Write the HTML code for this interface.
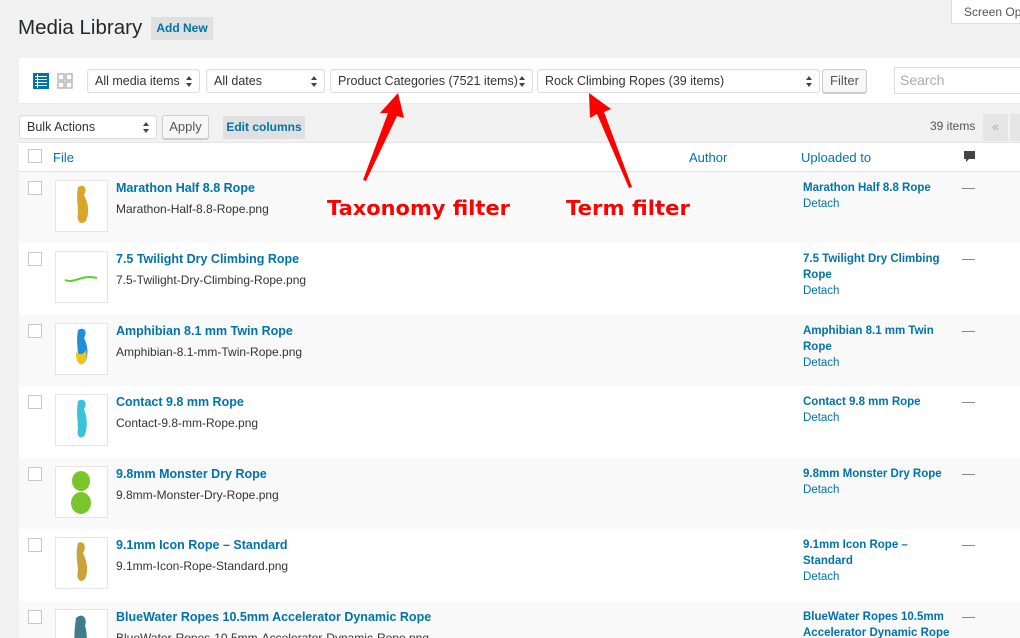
<!DOCTYPE html>
<html><head><meta charset="utf-8"><style>
*{box-sizing:border-box;margin:0;padding:0}
html,body{width:1020px;height:638px;overflow:hidden}
body{background:#f1f1f1;font-family:"Liberation Sans",sans-serif;font-size:13px;color:#444;position:relative}
.a{position:absolute}
.sel{position:absolute;background:#fff;border:1px solid #ddd;border-radius:3px;height:24px;line-height:22px;padding-left:7px;font-size:12.5px;color:#333;box-shadow:inset 0 1px 2px rgba(0,0,0,.05);white-space:nowrap;overflow:hidden}
.sel:after{content:"";position:absolute;right:7px;top:6px;width:0;height:0;border-left:3px solid transparent;border-right:3px solid transparent;border-bottom:4px solid #444}
.sel:before{content:"";position:absolute;right:7px;top:13px;width:0;height:0;border-left:3px solid transparent;border-right:3px solid transparent;border-top:4px solid #444}
.btn{position:absolute;background:#f7f7f7;border:1px solid #ccc;border-radius:3px;height:24px;line-height:22px;text-align:center;color:#555;box-shadow:0 1px 0 #ccc}
.row{position:absolute;left:19px;width:1010px;height:72px}
.cb{position:absolute;left:9px;top:9px;width:14px;height:14px;border:1px solid #c8c8c8;background:#fff}
.th{position:absolute;left:36px;top:8px;width:53px;height:52px;border:1px solid #e5e5e5;background:#fff}
.t{position:absolute;left:97px;top:9px;color:#0073aa;font-weight:bold;font-size:12.5px}
.f{position:absolute;left:97px;top:30px;color:#333;font-size:12px}
.u{position:absolute;left:784px;top:8px;color:#0073aa;font-weight:bold;font-size:11.5px;line-height:16px;width:150px}
.u span{font-weight:normal;display:block}
.d{position:absolute;left:943px;top:8px;color:#777}
.lab{font-family:"DejaVu Sans","Liberation Sans",sans-serif;font-weight:bold;font-size:20.5px;fill:#f00;stroke:#fff;stroke-width:3px;paint-order:stroke}
</style></head><body>
<div class="a" style="left:18px;top:16px;font-size:20.5px;color:#23282d">Media Library</div>
<div class="a" style="left:151px;top:17px;width:62px;height:23px;background:#e0e0e0;color:#0073aa;font-weight:bold;font-size:12px;line-height:23px;text-align:center">Add New</div>
<div class="a" style="left:951px;top:0;width:80px;height:24px;background:#fff;border:1px solid #ddd;border-top:0;color:#555;font-size:12px;line-height:24px;padding-left:12px">Screen Opt</div>
<div class="a" style="left:19px;top:58px;width:1010px;height:45px;background:#fff;box-shadow:0 1px 1px rgba(0,0,0,.04)"></div>
<svg class="a" style="left:33px;top:73px" width="16" height="16"><rect width="16" height="16" fill="#0073aa"/><g fill="#fff"><rect x="2" y="3" width="12" height="1"/><rect x="2" y="6" width="12" height="1"/><rect x="2" y="9" width="12" height="1"/><rect x="2" y="12" width="12" height="1"/><rect x="4" y="1" width="1" height="14"/></g></svg>
<svg class="a" style="left:57px;top:73px" width="16" height="16"><g fill="none" stroke="#b4b9be" stroke-width="1.5"><rect x="1" y="1" width="6" height="6"/><rect x="9" y="1" width="6" height="6"/><rect x="1" y="9" width="6" height="6"/><rect x="9" y="9" width="6" height="6"/></g></svg>
<div class="sel" style="left:87px;top:69px;width:113px">All media items</div>
<div class="sel" style="left:206px;top:69px;width:119px">All dates</div>
<div class="sel" style="left:330px;top:69px;width:203px">Product Categories (7521 items)</div>
<div class="sel" style="left:537px;top:69px;width:283px">Rock Climbing Ropes (39 items)</div>
<div class="btn" style="left:822px;top:69px;width:45px">Filter</div>
<div class="a" style="left:894px;top:67px;width:130px;height:27px;background:#fff;border:1px solid #ddd;color:#aaa;font-size:14px;line-height:25px;padding-left:5px">Search</div>
<div class="sel" style="left:19px;top:115px;width:138px">Bulk Actions</div>
<div class="btn" style="left:162px;top:115px;width:47px">Apply</div>
<div class="a" style="left:223px;top:116px;width:82px;height:23px;background:#e0e0e0;color:#0073aa;font-weight:bold;font-size:12px;line-height:23px;text-align:center">Edit columns</div>
<div class="a" style="left:930px;top:119px;color:#555;font-size:12px">39 items</div>
<div class="a" style="left:983px;top:114px;width:25px;height:27px;background:#e5e5e5;color:#aaa;text-align:center;line-height:26px">«</div>
<div class="a" style="left:1010px;top:114px;width:20px;height:27px;background:#e5e5e5"></div>
<div class="a" style="left:19px;top:142px;width:1010px;height:30px;background:#fff;border-bottom:1px solid #e1e1e1;border-top:1px solid #e5e5e5"></div>
<div class="a" style="left:28px;top:149px;width:14px;height:14px;border:1px solid #c8c8c8;background:#fff"></div>
<div class="a" style="left:53px;top:150px;color:#0073aa">File</div>
<div class="a" style="left:689px;top:150px;color:#0073aa">Author</div>
<div class="a" style="left:801px;top:150px;color:#0073aa">Uploaded to</div>
<svg class="a" style="left:964px;top:150px" width="12" height="13"><path d="M0 1h11v8H5l-3 3V9H0z" fill="#444"/></svg>

<div class="row" style="top:172px;background:#f9f9f9"><div class="cb"></div><div class="th"><svg width="51" height="50"><path d="M22 6c6-4 10 2 6 8 4 8 6 16 2 26-5 5-10 0-8-8 0-8-2-16 0-26z" fill="#d8a62a"/></svg></div><div class="t">Marathon Half 8.8 Rope</div><div class="f">Marathon-Half-8.8-Rope.png</div><div class="u">Marathon Half 8.8 Rope<span>Detach</span></div><div class="d">—</div></div>
<div class="row" style="top:243px;background:#fff"><div class="cb"></div><div class="th"><svg width="51" height="50"><path d="M9 28c10 4 16-6 32-2" stroke="#5ad12c" stroke-width="2" fill="none"/></svg></div><div class="t">7.5 Twilight Dry Climbing Rope</div><div class="f">7.5-Twilight-Dry-Climbing-Rope.png</div><div class="u">7.5 Twilight Dry Climbing Rope<span>Detach</span></div><div class="d">—</div></div>
<div class="row" style="top:315px;background:#f9f9f9"><div class="cb"></div><div class="th"><svg width="51" height="50"><path d="M22 6c6-4 10 2 6 8 3 6 5 14 2 22-4 8-10 4-8-4 0-8-2-16 0-26z" fill="#1e8fd8"/><path d="M20 28c4 4 8 2 10-2 2 8-2 16-6 14-4-2-4-8-4-12z" fill="#f0c419"/></svg></div><div class="t">Amphibian 8.1 mm Twin Rope</div><div class="f">Amphibian-8.1-mm-Twin-Rope.png</div><div class="u">Amphibian 8.1 mm Twin Rope<span>Detach</span></div><div class="d">—</div></div>
<div class="row" style="top:386px;background:#fff"><div class="cb"></div><div class="th"><svg width="51" height="50"><path d="M22 6c6-4 10 2 6 8 3 8 4 16 1 26-4 5-9 2-7-6 0-8-2-16 0-28z" fill="#3ac3d8"/></svg></div><div class="t">Contact 9.8 mm Rope</div><div class="f">Contact-9.8-mm-Rope.png</div><div class="u">Contact 9.8 mm Rope<span>Detach</span></div><div class="d">—</div></div>
<div class="row" style="top:458px;background:#f9f9f9"><div class="cb"></div><div class="th"><svg width="51" height="50"><ellipse cx="25" cy="14" rx="9" ry="10" fill="#7ac52a"/><ellipse cx="25" cy="36" rx="10" ry="11" fill="#7ac52a"/></svg></div><div class="t">9.8mm Monster Dry Rope</div><div class="f">9.8mm-Monster-Dry-Rope.png</div><div class="u">9.8mm Monster Dry Rope<span>Detach</span></div><div class="d">—</div></div>
<div class="row" style="top:529px;background:#fff"><div class="cb"></div><div class="th"><svg width="51" height="50"><path d="M22 5c6-3 9 4 5 10 4 8 6 18 2 26-5 5-9 0-7-8 0-8-3-16 0-28z" fill="#c9a23a"/></svg></div><div class="t">9.1mm Icon Rope – Standard</div><div class="f">9.1mm-Icon-Rope-Standard.png</div><div class="u">9.1mm Icon Rope – Standard<span>Detach</span></div><div class="d">—</div></div>
<div class="row" style="top:601px;background:#f9f9f9"><div class="cb"></div><div class="th"><svg width="51" height="50"><path d="M20 8c6-6 12 0 9 8 3 8 2 24 0 34h-10c0-10-2-22 1-42z" fill="#3f7d8c"/></svg></div><div class="t">BlueWater Ropes 10.5mm Accelerator Dynamic Rope</div><div class="f">BlueWater-Ropes-10.5mm-Accelerator-Dynamic-Rope.png</div><div class="u">BlueWater Ropes 10.5mm Accelerator Dynamic Rope</div><div class="d">—</div></div>

<svg class="a" style="left:0;top:0" width="1020" height="638">
<path d="M398 93 L404 118 L397 116 L366 181 L363 180 L388 113 L380 113 Z" fill="#f00"/>
<path d="M589 93 L611 109 L604 112 L632 187 L629 188 L597 114 L590 118 Z" fill="#f00"/>
<text class="lab" x="327" y="215" textLength="183" lengthAdjust="spacingAndGlyphs">Taxonomy filter</text>
<text class="lab" x="566" y="215" textLength="124" lengthAdjust="spacingAndGlyphs">Term filter</text>
</svg>
</body></html>
